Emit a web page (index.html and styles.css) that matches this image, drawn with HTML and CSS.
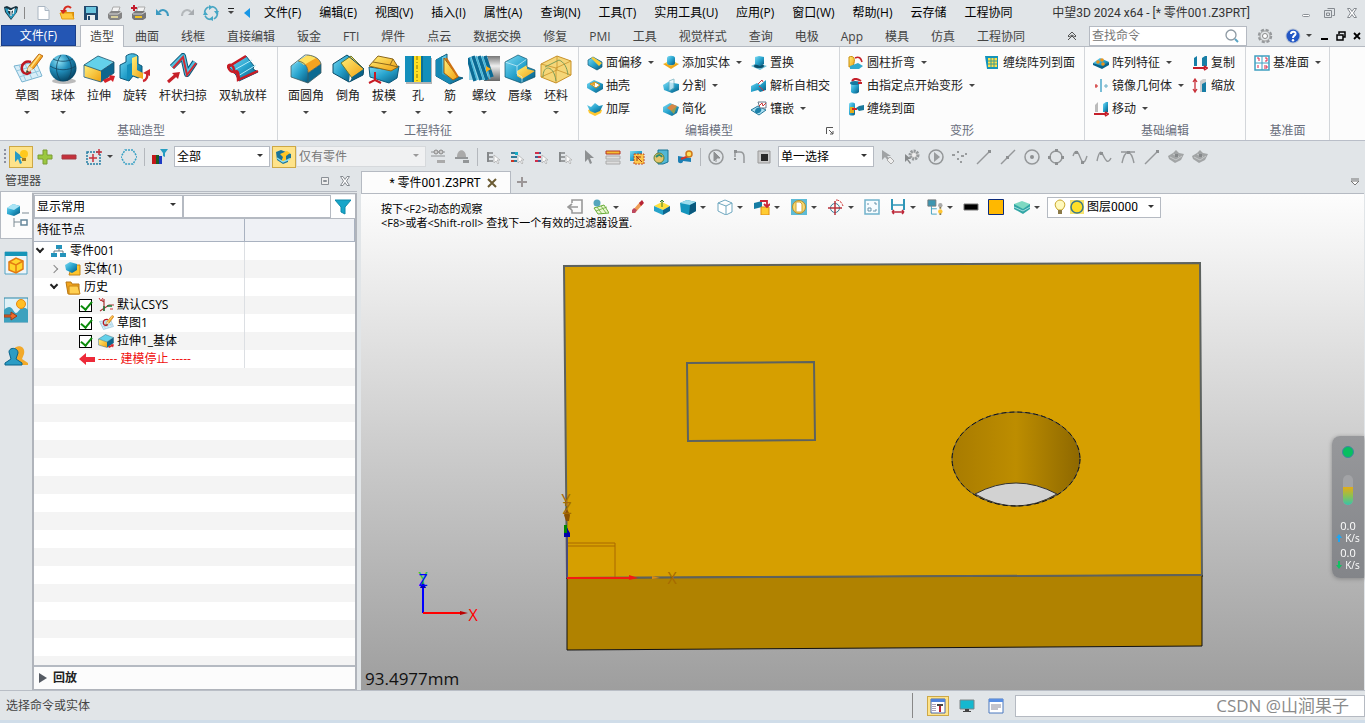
FILE: index.html
```html
<!DOCTYPE html>
<html lang="zh-CN">
  <head>
    <meta charset="utf-8">
    <title>中望3D 2024 x64 - [* 零件001.Z3PRT]</title>
    <link rel="stylesheet" href="styles.css">
  </head>
  <body>

    <!-- icon sprite -->
    <svg class="sprite" aria-hidden="true">
      <defs>
        <linearGradient id="gb" x1="0" y1="0" x2="1" y2="1"><stop offset="0" stop-color="#7fdcf4"/><stop offset=".5" stop-color="#27a3cd"/><stop offset="1" stop-color="#07597f"/></linearGradient>
        <linearGradient id="gy" x1="0" y1="0" x2="1" y2="1"><stop offset="0" stop-color="#fff07a"/><stop offset="1" stop-color="#f0a010"/></linearGradient>
        <linearGradient id="gr" x1="0" y1="0" x2="0" y2="1"><stop offset="0" stop-color="#777"/><stop offset=".4" stop-color="#eee"/><stop offset="1" stop-color="#666"/></linearGradient>
        <radialGradient id="gs" cx=".35" cy=".25" r=".8"><stop offset="0" stop-color="#8fe2f5"/><stop offset=".45" stop-color="#2390bd"/><stop offset="1" stop-color="#03405f"/></radialGradient>
        <linearGradient id="hole" x1="0" x2="1" y1="0" y2="0"><stop offset="0" stop-color="#a87b00"/><stop offset=".5" stop-color="#bd8d00"/><stop offset="1" stop-color="#8e6800"/></linearGradient>
        <linearGradient id="meter" x1="0" x2="0" y1="0" y2="1"><stop offset="0" stop-color="#e3ac17"/><stop offset=".5" stop-color="#8cc152"/><stop offset="1" stop-color="#36c3ac"/></linearGradient>
      </defs>

      <symbol id="logo" viewBox="0 0 16 16"><path d="M1 2l3-1 4 2 5-2 2 1-1 5-6 8-6-8z" fill="#16303d"/><path d="M2 3l4 1-1 3 3 4 4-7 2-1-1 5-5 6-5-7z" fill="#2b9cc0"/><path d="M5 5l3 1v5M8 6l3-2-1 5" stroke="#fff" stroke-width="1.2" fill="none"/></symbol>
      <symbol id="new" viewBox="0 0 16 16"><path d="M3 1.5h7l4 4v9H3z" fill="#fff" stroke="#aab6c2"/><path d="M10 1.5v4h4" fill="#dce6ee" stroke="#aab6c2"/></symbol>
      <symbol id="open" viewBox="0 0 16 16"><path d="M2 5h5l1 2h7v7H3z" fill="#d98c0a"/><path d="M1 8h12l2 6H3z" fill="#ffc83d" stroke="#e59d12"/><path d="M12 3c-3-3-7-1-7 3" fill="none" stroke="#d62b1f" stroke-width="2"/><path d="M1 5h7L4 9z" fill="#d62b1f"/></symbol>
      <symbol id="save" viewBox="0 0 16 16"><path d="M1 1h13l1 1v13H1z" fill="#234a6e"/><path d="M3 2h10v6H3z" fill="#6ac5df"/><path d="M4 10h8v5H4z" fill="#e9edf0"/><path d="M5 11h2v4H5z" fill="#234a6e"/></symbol>
      <symbol id="print" viewBox="0 0 16 16"><path d="M6 2h7l-2 6H4z" fill="#f4f4f4" stroke="#aaa"/><path d="M1 9l3-3h9l2 2v5l-3 2H3l-2-2z" fill="#858585"/><path d="M2 9h9l3-2" stroke="#d5d5d5" fill="none"/><path d="M4 11h7v2H4z" fill="#d8cf9c"/></symbol>
      <symbol id="printadd" viewBox="0 0 16 16"><path d="M7 2h7l-2 6H5z" fill="#f4f4f4" stroke="#aaa"/><path d="M1 9l3-3h9l2 2v5l-3 2H3l-2-2z" fill="#777"/><path d="M2 9h9l3-2" stroke="#d5d5d5" fill="none"/><path d="M4 11h7v2H4z" fill="#f0c020"/><path d="M3 0v6M0 3h6" stroke="#c3192b" stroke-width="2"/></symbol>
      <symbol id="undo" viewBox="0 0 16 16"><path d="M4 7c4-4 9-1 9 4" fill="none" stroke="#3c9ac0" stroke-width="2"/><path d="M1 4v6h6z" fill="#3c9ac0"/></symbol>
      <symbol id="redo" viewBox="0 0 16 16"><path d="M12 7C8 3 3 6 3 11" fill="none" stroke="#b4b8bb" stroke-width="2"/><path d="M15 4v6H9z" fill="#a8acb0"/></symbol>
      <symbol id="cycle" viewBox="0 0 16 16"><circle cx="8" cy="8" r="6.5" fill="none" stroke="#4aa5c2" stroke-width="1.6" stroke-dasharray="7 3.2"/><path d="M6 0l4 2-4 3zM16 6l-2 4-3-4zM10 16l-4-2 4-3zM0 10l2-4 3 4z" fill="#45a8c6"/></symbol>
      <symbol id="tri-l" viewBox="0 0 8 12"><path d="M7 1v10L1 6z" fill="#1897e6"/></symbol>
      <symbol id="min" viewBox="0 0 12 12"><rect x="2.500" y="7.500" width="7" height="2" rx="1" fill="#fff" stroke="#8b9096"/></symbol>
      <symbol id="restore" viewBox="0 0 12 12"><path d="M4.500 1.500h7v7h-2M1.500 3.500h7v7h-7zM3.500 6h3v2.500h-3z" fill="none" stroke="#858a90"/></symbol>
      <symbol id="close" viewBox="0 0 12 12"><path d="M1.500 1.500h2.500l2 3 2-3h2.500L7.500 6l3 4.500H8l-2-3-2 3H1.500l3-4.500z" fill="#fff" stroke="#858a90"/></symbol>
      <symbol id="min2" viewBox="0 0 10 10"><path d="M1 7h7v2H1z"/></symbol>
      <symbol id="restore2" viewBox="0 0 10 10"><path d="M3 3V1h6v5H7M1 4h6v5H1z" fill="none" stroke="#000" stroke-width="1.500"/></symbol>
      <symbol id="close2" viewBox="0 0 10 10"><path d="M2 2l6 6M8 2L2 8" stroke="#000" stroke-width="1.800"/></symbol>
      <symbol id="up" viewBox="0 0 10 10"><path d="M1 5l4-4 4 4-1 1-3-2-3 2zM1 9l4-4 4 4" fill="none" stroke="#555"/></symbol>
      <symbol id="lens" viewBox="0 0 16 16"><circle cx="7" cy="7" r="5" fill="none" stroke="#8e9aa3" stroke-width="1.300"/><path d="M11 11l3 3" stroke="#5aa5c5" stroke-width="2"/></symbol>
      <symbol id="gear" viewBox="0 0 16 16"><circle cx="8" cy="8" r="6" fill="#d5d8da" stroke="#96999c" stroke-width="2.5" stroke-dasharray="3 1.7"/><circle cx="8" cy="8" r="5" fill="#e3e6e8" stroke="#a5a5a5"/><circle cx="8" cy="8" r="2.5" fill="#fff" stroke="#888"/></symbol>
      <symbol id="help" viewBox="0 0 16 16"><circle cx="8" cy="8" r="7.5" fill="#b9c4d6"/><circle cx="8" cy="8" r="6.5" fill="#2357c5"/><path d="M6 6c0-3 5-3 4.500 0C10 8 8 7.500 8 10" fill="none" stroke="#fff" stroke-width="2"/><circle cx="8" cy="12.200" r="1.200" fill="#fff"/></symbol>

      <!-- large ribbon icons -->
      <symbol id="b-sketch" viewBox="0 0 32 32"><path d="M3 13l22-4 6 14-20 6z" fill="#d8edf8" stroke="#78b3d0"/><path d="M8 12l7 16M14 11l7 15M20 10l7 13M5 18l21-6M8 24l20-6" stroke="#93c8df" fill="none"/><path d="M20 9C9 6 8 21 16 21l4-2" fill="none" stroke="#bd1622" stroke-width="2.500"/><path d="M15 20l3-7L28 1l4 2-9 12z" fill="#f5a623" stroke="#bb6a12"/><path d="M20 14L29 2" stroke="#ffdf80" stroke-width="1.5"/><path d="M15 20l3-7 4 3z" fill="#f5dfb1"/><path d="M15 20l1-3 2 2z" fill="#333"/></symbol>
      <symbol id="b-sphere" viewBox="0 0 32 32"><ellipse cx="17" cy="28" rx="12" ry="3" fill="#bbb"/><circle cx="16" cy="15" r="13.500" fill="url(#gs)"/><path d="M3 13c8 5 18 5 26 0M14 2c-6 8-6 19 0 26M19 2c7 8 7 18 1 26M6 6c6 3 14 3 20 0" fill="none" stroke="#14425d" stroke-width=".8"/></symbol>
      <symbol id="b-extrude" viewBox="0 0 32 32"><path d="M1 12L15 3l15 6-12 9z" fill="#63d1ea"/><path d="M1 12l17 6v11L2 24z" fill="url(#gy)"/><path d="M18 18l13-9v11l-13 9z" fill="#0d668e"/><path d="M1 12L15 3l16 6-13 9zv12l17 5 13-9V9" fill="none" stroke="#14506a" stroke-width=".8"/><path d="M20 27l7-3-1-2 6 1-2 6-2-2-6 3z" fill="#d62229"/></symbol>
      <symbol id="b-revolve" viewBox="0 0 32 32"><path d="M1 12l6-3V3c4-3 9-3 12 0v8l4 2v10l-4 2-5-2-4 5-9-3z" fill="url(#gb)" stroke="#0a587a"/><path d="M13 5l5-2v14l6 3v6l-11-4z" fill="url(#gy)"/><path d="M13 5v18l-5 5V12l5-2" fill="#138fbc"/><path d="M24 28c4-1 5-5 4-9" fill="none" stroke="#cc2730" stroke-width="2.5"/><path d="M24 20l7-4v7z" fill="#cc2730"/></symbol>
      <symbol id="b-rod" viewBox="0 0 32 32"><path d="M5 14L16 3l4 18L28 9" fill="none" stroke="#0a587a" stroke-width="6" stroke-linejoin="round"/><path d="M5 14L16 3l4 18L28 9" fill="none" stroke="#53c0df" stroke-width="4" stroke-linejoin="round"/><path d="M6 15L16 4l4 18 9-12" fill="none" stroke="#d22931" stroke-width="2"/><path d="M1 29l8-7" stroke="#c61f28" stroke-width="3"/><path d="M5 20l8-1-2 7z" fill="#c61f28"/></symbol>
      <symbol id="b-loft" viewBox="0 0 32 32"><path d="M2 14L19 3l8 10-1 3 5 3-19 9-3-6z" fill="url(#gb)" stroke="#0a587a"/><path d="M9 16L25 7M11 23L29 12" stroke="#b4edfa"/><path d="M19 3L1 14c5 12 9-4 10 13L31 18M1 14c0-4 6-3 6 4 0 6 4-8 5 9" fill="none" stroke="#c81c25" stroke-width="2.400"/></symbol>
      <symbol id="b-fillet" viewBox="0 0 32 32"><path d="M1 13l7-5c6 1 10 5 10 12v10L1 24z" fill="url(#gb)"/><path d="M1 13L14 3l4 1L8 9z" fill="#a4e6f5"/><path d="M18 20l13-9v9l-13 10z" fill="#0c6a91"/><path d="M8 8l10-6c7 1 12 4 13 9l-13 9C18 13 14 9 8 8z" fill="#f5a320"/><path d="M8 8l10-6c3 0 6 1 8 3L14 12c-2-2-4-3-6-4z" fill="#ffe060"/><path d="M1 13L15 2h3c7 1 12 4 13 9v9L18 30 1 24zM8 8c6 1 10 5 10 12v10M18 20l13-9" fill="none" stroke="#3d5c60" stroke-width=".8"/></symbol>
      <symbol id="b-chamfer" viewBox="0 0 32 32"><path d="M1 11L15 2l4 2-5 4 4 12-1 9L1 20z" fill="url(#gb)"/><path d="M9 10l10-7 13 13-12 9z" fill="url(#gy)" stroke="#6b7a30"/><path d="M32 16l-1 6-13 7 2-5z" fill="#0a6389"/><path d="M1 11L15 2l17 14-1 6-14 7L1 20z" fill="none" stroke="#0b4c68"/></symbol>
      <symbol id="b-draft" viewBox="0 0 32 32"><path d="M1 14l22 3 8-4-2 12-8 5-19-6z" fill="url(#gb)" stroke="#0a587a"/><path d="M1 13L10 3l15 3 5 8-7 4z" fill="url(#gy)" stroke="#8c671c"/><path d="M5 9l17 3 8 2M22 12l3-6" stroke="#8c671c" fill="none"/><path d="M7 19v8l-6 3M7 27l6 3" stroke="#c71b24" stroke-width="2" fill="none"/></symbol>
      <symbol id="b-hole" viewBox="0 0 32 32"><path d="M4 5h26v26H4z" fill="#b5b5b5"/><path d="M3 3h26v26H3z" fill="#138fbc"/><path d="M12 3h7v26h-7z" fill="#ffdf21"/><path d="M11 3v26M20 3v26" stroke="#07506e" stroke-width="1"/><path d="M15 3v26" stroke="#8a7208" stroke-dasharray="4 2 1 2"/></symbol>
      <symbol id="b-rib" viewBox="0 0 32 32"><path d="M2 7L13 1v20l16 4-13 6-14-8z" fill="url(#gb)" stroke="#0a587a"/><path d="M10 5l14 19-5 3-9-7z" fill="url(#gy)" stroke="#a06010"/><path d="M2 7l6-4v18l8 4v6L2 23z" fill="#1789b4"/><path d="M12 5l12 19" stroke="#cf7110" stroke-width="2"/></symbol>
      <symbol id="b-thread" viewBox="0 0 32 32"><path d="M16 3h16v25H16z" fill="url(#gr)"/><path d="M1 4h19v23H1z" fill="#94d4e8"/><path d="M0 5l7 23M5 3l8 24M11 3l8 24M17 3l7 21" stroke="#0b6a94" stroke-width="3.500"/><path d="M2 4l7 23M8 3l8 24M14 3l8 23" stroke="#48b6d8" stroke-width="1.500"/><path d="M18 13l5 3-5 3z" fill="#f4ac1c"/></symbol>
      <symbol id="b-lip" viewBox="0 0 32 32"><path d="M1 9L14 2l9 4v8l8 3v7L17 30 1 24z" fill="url(#gb)"/><path d="M13 18l10-6v4l8 2-13 8-5-3z" fill="url(#gy)"/><path d="M1 9l12 4v8l5 3v6M13 13l10-7" fill="none" stroke="#d7f4fc" stroke-width=".7"/><path d="M1 9L14 2l9 4v8l8 3v7L17 30 1 24z" fill="none" stroke="#0b536d" stroke-width=".7"/></symbol>
      <symbol id="b-blank" viewBox="0 0 32 32"><path d="M1 11L17 3l14 5v14l-15 8L1 24z" fill="#f5d678" stroke="#c8922a"/><path d="M1 11l15 4v15M16 15l15-7M17 3v14L1 24M17 17l14 5" fill="none" stroke="#c8922a" stroke-width=".8"/><path d="M3 24c0-13 11-12 13 4M5 14l14-7c5 2 8 7 9 15" fill="none" stroke="#7b9c58"/></symbol>

      <!-- small ribbon icons -->
      <symbol id="s-offset" viewBox="0 0 16 16"><path d="M1 5l5-3 9 5v5l-5 3-9-5z" fill="url(#gb)" stroke="#0a587a" stroke-width=".7"/><path d="M4 3l2-1 9 6-3 3z" fill="#f6cb38"/></symbol>
      <symbol id="s-shell" viewBox="0 0 16 16"><path d="M0 6l7-4 9 4v5l-7 4-9-5z" fill="url(#gb)"/><path d="M3 6l5-2 5 3-4 3z" fill="#fff" stroke="#c38b19"/><path d="M3 6l5-2v4z" fill="#e3a22a"/></symbol>
      <symbol id="s-thick" viewBox="0 0 16 16"><path d="M1 9l7-3 7 3-1 3-6 3-6-3z" fill="#ffc831"/><path d="M0 4l4 2 4-4 4 3 4-1-3 6-5 2-5-2z" fill="url(#gb)"/></symbol>
      <symbol id="s-add" viewBox="0 0 16 16"><path d="M0 9l8-3 8 3-8 5z" fill="#f2a718"/><path d="M2 8l6-3 6 3-6 3z" fill="#ffdb52"/><path d="M4 3c0-3 8-3 8 0v5c0 3-8 3-8 0z" fill="url(#gb)"/></symbol>
      <symbol id="s-split" viewBox="0 0 16 16"><path d="M0 7l5-3 11 2v6l-7 3-8-3z" fill="url(#gb)"/><path d="M6 3l5-2v9l-5 3z" fill="#eaf7fd" stroke="#6ab" opacity=".7"/></symbol>
      <symbol id="s-simple" viewBox="0 0 16 16"><path d="M0 6l7-4 9 4-2 6-5 3-9-4z" fill="url(#gb)"/><path d="M4 7l5-4 5 2-4 6z" fill="#d88745"/><path d="M8 10l6-5-3 8z" fill="#8f9e55"/></symbol>
      <symbol id="s-replace" viewBox="0 0 16 16"><path d="M0 11l6-3 10 3-7 4z" fill="#6ebcd5"/><ellipse cx="8" cy="11" rx="5" ry="2" fill="#0b516e"/><path d="M4 2l4-1 5 1v7l-4 2-5-2z" fill="url(#gb)"/></symbol>
      <symbol id="s-cross" viewBox="0 0 16 16"><path d="M0 8l6-3 3 2 6-5v10l-6 2-2-2-7 2z" fill="url(#gb)"/><path d="M7 6l4-4 1 2M8 8l5 5" stroke="#c43a46" fill="none"/></symbol>
      <symbol id="s-inlay" viewBox="0 0 16 16"><path d="M0 9l7-4 8 4-7 5z" fill="#a9dff1" stroke="#25799b"/><path d="M4 10c1-5 8-4 6 0-1 3-7 3-6 0z" fill="#1d82aa"/><path d="M7 1h8v6H9z" fill="#fff" stroke="#678"/><path d="M8 5l3-3 1 3 3-3" fill="none" stroke="#c33"/></symbol>
      <symbol id="s-bend" viewBox="0 0 16 16"><path d="M1 2c5-2 7 2 4 9l-4 1z" fill="url(#gy)" stroke="#c98c0a"/><path d="M2 11l8-3 5 3-4 3H2z" fill="#31aace"/><path d="M7 3c4-2 6 0 7 4" stroke="#c72429" stroke-width="1.600" fill="none"/></symbol>
      <symbol id="s-deform" viewBox="0 0 16 16"><path d="M3 5h8v9c-2 2-6 2-8 0z" fill="url(#gb)"/><ellipse cx="7" cy="5" rx="5" ry="2" fill="#1579a0"/><path d="M4 3c2-3 6-2 9 0M10 5h4" stroke="#c5202b" stroke-width="2" fill="none"/></symbol>
      <symbol id="s-wrap" viewBox="0 0 16 16"><path d="M1 3c0-2 6-2 6 0v10c0 2-6 2-6 0z" fill="url(#gb)"/><path d="M2 6h4v6H2z" fill="#e5ac19"/><path d="M4 8h5" stroke="#d22" stroke-width="2"/><path d="M8 7l3-2 5-1v5l-5 1z" fill="#1b789b"/></symbol>
      <symbol id="s-warray" viewBox="0 0 16 16"><path d="M1 1h13v13H3z" fill="#1494bb"/><path d="M4 3h9v9H4z" fill="#ffe04a"/><path d="M7 3v9M10 3v9M4 6h9M4 9h9" stroke="#3f9a8d"/></symbol>
      <symbol id="s-array" viewBox="0 0 16 16"><path d="M0 8l7-5 9 4-7 6z" fill="url(#gb)"/><path d="M0 8l9 3v3l-9-4zM16 7v3l-7 4v-3z" fill="#0a6389"/><circle cx="5" cy="7" r="1.800" fill="#e9931c"/><circle cx="9" cy="5" r="1.800" fill="#e9931c"/><circle cx="10" cy="9" r="1.800" fill="#e9931c"/></symbol>
      <symbol id="s-mirror" viewBox="0 0 16 16"><path d="M8 1v13" stroke="#4ca8cb" stroke-width="1.500"/><path d="M3 6v4M2 8h3" stroke="#c22"/><path d="M13 6v4M11 8h4" stroke="#69aec7"/></symbol>
      <symbol id="s-move" viewBox="0 0 16 16"><path d="M2 4l3-3v10H2z" fill="#bbb"/><path d="M10 3l3-2h2v10h-5z" fill="url(#gb)"/><path d="M1 13h12M12 11l3 2-3 2" stroke="#c51f2a" stroke-width="2" fill="none"/></symbol>
      <symbol id="s-copy" viewBox="0 0 16 16"><path d="M2 3l3-2v10H2zM10 3l3-2h2v10h-5z" fill="#187ea6"/><path d="M1 13h12M12 11l3 2-3 2" stroke="#c51f2a" stroke-width="2" fill="none"/></symbol>
      <symbol id="s-scale" viewBox="0 0 16 16"><path d="M3 1v13M1 4l2-3 2 3M1 11l2 3 2-3" stroke="#c8313a" stroke-width="1.300" fill="none"/><path d="M8 3l3-2h3v13H8z" fill="#ccc"/><path d="M10 6l4-2v10h-4z" fill="#177da5"/></symbol>
      <symbol id="s-datum" viewBox="0 0 16 16"><path d="M1 1h14v14H1z" fill="#fff" stroke="#3f9fc0" stroke-width="1.500"/><path d="M8 1v7H1M8 8h7M8 8v7" stroke="#3f9fc0" fill="none"/><path d="M3 3h2v3M4 10v3M11 3h2v3h-2M10 11h3v2h-3" stroke="#d24" fill="none"/></symbol>

      <!-- selection bar icons -->
      <symbol id="t-pick" viewBox="0 0 16 16"><path d="M2 2v11l3-3 2 5 2-1-2-5h4z" fill="#289bc5"/><circle cx="11" cy="5" r="4" fill="#ffc91c"/><path d="M9 9h4v3H9z" fill="#a97b18"/></symbol>
      <symbol id="t-plus" viewBox="0 0 16 16"><path d="M6 1h4v5h5v4h-5v5H6v-5H1V6h5z" fill="#9bc840" stroke="#7a9c35"/></symbol>
      <symbol id="t-minus" viewBox="0 0 16 16"><path d="M1 6h14v4H1z" fill="#c6303b" stroke="#a23a42"/></symbol>
      <symbol id="t-box" viewBox="0 0 16 16"><path d="M1 3h13v12H1z" fill="none" stroke="#247da3" stroke-width="1.500" stroke-dasharray="2 1"/><path d="M7 5v8M3 9h8M13 0v6M10 3h6" stroke="#c8303b" stroke-width="1.500"/></symbol>
      <symbol id="t-hex" viewBox="0 0 16 16"><path d="M4 1h8l4 7-4 7H4L0 8z" fill="none" stroke="#37a0c4" stroke-width="1.500" stroke-dasharray="2 1"/></symbol>
      <symbol id="t-filter" viewBox="0 0 16 16"><path d="M0 6h4v9H0z" fill="#c41818"/><path d="M4 6h3v9H4z" fill="#185c27"/><path d="M7 7h3v8H7z" fill="#1e3bc4"/><path d="M8 0h8l-3 4v4l-2-1V4z" fill="#279ec2"/></symbol>
      <symbol id="t-part" viewBox="0 0 16 16"><path d="M0 3l5-2 10 4v4l-3 1v3l-5 2-6-4z" fill="#1a7398"/><path d="M4 5l7-3 3 2-4 3v5l-5 1 2-5z" fill="#ffc524"/><path d="M1 9l6 4 7-3" stroke="#8bdcf0" fill="none" stroke-width="1.500"/></symbol>
      <symbol id="t-chain" viewBox="0 0 16 16"><path d="M1 3h14M1 7h14M8 12h6" stroke="#8f9294"/><circle cx="6" cy="3" r="2" fill="#ccc" stroke="#888"/><circle cx="11" cy="3" r="2" fill="#ccc" stroke="#888"/><path d="M7 11h8v3H7z" fill="#aaa"/></symbol>
      <symbol id="t-hat" viewBox="0 0 16 16"><path d="M3 8c0-9 9-9 9 0z" fill="#aaa"/><path d="M1 8h13v2H1zM9 11h6v3H9z" fill="#939698"/></symbol>
      <symbol id="t-list" viewBox="0 0 16 16"><path d="M2 3h6v2H2zM2 7h6v2H2zM2 11h6v2H2z" fill="#999c9e"/><path d="M2 3h2v10H2z" fill="#85888a"/><path d="M9 6v8l2-2 2 3 1-1-2-3h3z" fill="#fafafa" stroke="#aaa" stroke-width=".7"/></symbol>
      <symbol id="t-listc" viewBox="0 0 16 16"><path d="M2 3h6v2H2zM2 7h6v2H2zM2 11h6v2H2z" fill="#327a98"/><path d="M6 3h3v3H6z" fill="#17aec7"/><path d="M2 11h3v2H2z" fill="#c32"/><path d="M9 6v8l2-2 2 3 1-1-2-3h3z" fill="#fafafa" stroke="#aaa" stroke-width=".7"/></symbol>
      <symbol id="t-listr" viewBox="0 0 16 16"><path d="M2 3h6v2H2zM2 7h6v2H2zM2 11h6v2H2z" fill="#445f91"/><path d="M2 3h4v2H2zM5 7h3v2H5zM2 11h3v2H2z" fill="#d22d4a"/><path d="M9 6v8l2-2 2 3 1-1-2-3h3z" fill="#fafafa" stroke="#aaa" stroke-width=".7"/></symbol>
      <symbol id="t-cursor" viewBox="0 0 16 16"><path d="M4 1v12l3-3 2 5 2-1-2-5h4z" fill="#8d9092"/></symbol>
      <symbol id="t-stack" viewBox="0 0 16 16"><path d="M1 2h14v3H1z" fill="#f4bd32" stroke="#b53224"/><path d="M1 7h14v3H1zM1 12h14v3H1z" fill="#ddd" stroke="#aaa"/></symbol>
      <symbol id="t-sel" viewBox="0 0 16 16"><path d="M1 2h12v10H1z" fill="url(#gb)"/><path d="M5 5h10v10H5z" fill="#fbc74c" stroke="#c74c20" stroke-dasharray="2 1"/><path d="M7 7l6 6M8 8h4M8 8v4" stroke="#9d3815"/></symbol>
      <symbol id="t-world" viewBox="0 0 16 16"><path d="M5 1h10v12l-5 2H5z" fill="#54b7d4" stroke="#167595"/><circle cx="6" cy="9" r="5" fill="#e5c46a" stroke="#62803a"/><path d="M3 8c3-3 5-2 6 0" stroke="#298c71" fill="none" stroke-width="2"/></symbol>
      <symbol id="t-bend" viewBox="0 0 16 16"><path d="M1 7v5c0 3 5 3 5 0l8 1V9L7 8z" fill="#1c7fb4"/><path d="M4 10l8-3" stroke="#d43628" stroke-width="2"/><circle cx="12" cy="5" r="3" fill="#ffdf59" stroke="#cf781b" stroke-width="1.500"/></symbol>
      <symbol id="t-ccur" viewBox="0 0 16 16"><circle cx="8" cy="8" r="7" fill="none" stroke="#96999b" stroke-width="1.500"/><path d="M6 3v9l3-3h3zM8 8v5" fill="#8d9092" stroke="#8d9092"/></symbol>
      <symbol id="t-u" viewBox="0 0 16 16"><path d="M3 8V3h5c4 0 4 3 4 5v6" fill="none" stroke="#95989a" stroke-width="1.5"/><path d="M2 1h3v3H2zM2 9h2v2H2z" fill="#8d9092"/></symbol>
      <symbol id="t-square" viewBox="0 0 16 16"><path d="M2 2h12v12H2z" fill="#ccc" stroke="#999"/><path d="M5 5h7v7H5z" fill="#292929"/></symbol>
      <symbol id="t-curx" viewBox="0 0 16 16"><path d="M2 1v10l3-3 5 6 2-2-5-5h4z" fill="#a0a3a5"/><path d="M10 8l4 4-3 3-4-4z" fill="#eee" stroke="#aaa"/></symbol>
      <symbol id="t-cgear" viewBox="0 0 16 16"><circle cx="10" cy="6" r="4" fill="#ccc" stroke="#969a9c" stroke-width="3" stroke-dasharray="2 1"/><circle cx="10" cy="6" r="2" fill="#eee"/><path d="M1 5v8l2-2 3 4 1-1-3-4h3z" fill="#86898b"/></symbol>
      <symbol id="t-play" viewBox="0 0 16 16"><circle cx="8" cy="8" r="7" fill="none" stroke="#939698" stroke-width="1.500"/><path d="M6 3l6 5-6 5z" fill="#999c9e"/></symbol>
      <symbol id="t-dots" viewBox="0 0 16 16"><path d="M0 5h3v2H0zM5 2h2v2H5zM9 6h3v2H9zM13 4h2v2h-2zM5 9h2v2H5zM8 12h2v2H8z" fill="#999c9e"/></symbol>
      <symbol id="t-line" viewBox="0 0 16 16"><path d="M1 15L14 2" stroke="#95989a" stroke-width="1.400"/><path d="M12 1h3v3h-3z" fill="#8d9092"/></symbol>
      <symbol id="t-mid" viewBox="0 0 16 16"><path d="M1 15L15 1" stroke="#95989a" stroke-width="1.400"/><path d="M6 7h3v3H6z" fill="#8d9092"/></symbol>
      <symbol id="t-center" viewBox="0 0 16 16"><circle cx="8" cy="8" r="7" fill="none" stroke="#95989a" stroke-width="1.500"/><circle cx="8" cy="8" r="2" fill="#8d9092"/></symbol>
      <symbol id="t-quad" viewBox="0 0 16 16"><circle cx="8" cy="8" r="6" fill="none" stroke="#95989a" stroke-width="1.500"/><path d="M7 0h3v3H7zM7 13h3v3H7zM0 7h3v3H0zM13 7h3v3h-3z" fill="#8d9092"/></symbol>
      <symbol id="t-wave" viewBox="0 0 16 16"><path d="M1 7c3-8 5-4 7 1s4 9 7-1" fill="none" stroke="#95989a" stroke-width="1.400"/><path d="M3 2h3v3H3zM9 12h3v3H9z" fill="#8d9092"/></symbol>
      <symbol id="t-wave2" viewBox="0 0 16 16"><path d="M1 12C4-2 6 4 8 8s4 7 7 1" fill="none" stroke="#95989a" stroke-width="1.400"/><path d="M4 3h3v3H4z" fill="#8d9092"/></symbol>
      <symbol id="t-tan" viewBox="0 0 16 16"><path d="M1 3h14M2 14c3-14 9-14 12 0" fill="none" stroke="#95989a" stroke-width="1.400"/><path d="M7 2h3v3H7z" fill="#8d9092"/></symbol>
      <symbol id="t-face" viewBox="0 0 16 16"><path d="M0 7l5-3 3-3 3 3 5 1-3 6-6 3-6-4z" fill="#a2a5a6"/><path d="M2 8l6 3 6-4M5 5l6 3" stroke="#c7c9ca" fill="none"/><path d="M7 5h3v3H7z" fill="#85888a"/></symbol>

      <!-- manager icons -->
      <symbol id="m-tree" viewBox="0 0 24 26"><path d="M2 6l6-4 7 2v7l-6 3-7-2z" fill="url(#gb)"/><path d="M2 6l6-4 7 2-6 4z" fill="#a9e4f5"/><path d="M9 16v9M9 20h6M17 11h7" stroke="#7d8b94" fill="none"/><path d="M16 18h6v5h-6z" fill="#fff" stroke="#65869a" stroke-width="1.500"/></symbol>
      <symbol id="m-cube" viewBox="0 0 24 24"><path d="M1 1h22v22H1z" fill="#eef5f9" stroke="#55a4c4"/><path d="M1 1h22v4H1z" fill="#1595b8"/><path d="M5 11l7-4 7 3v8l-7 4-7-3z" fill="#ffd52c" stroke="#e37b12" stroke-width="1.500"/><path d="M5 11l7 3 7-4M12 14v8" fill="none" stroke="#e37b12" stroke-width="1.500"/></symbol>
      <symbol id="m-view" viewBox="0 0 24 24"><path d="M0 0h24v24H0z" fill="#dff1f7" stroke="#2b87a9"/><path d="M0 12c8-8 9 3 12 3s5-10 12-3v12H0z" fill="#3ca1be"/><circle cx="17" cy="6" r="4.500" fill="#ffbf24" stroke="#ea8711"/><path d="M0 17h7v-3l6 4-6 4v-3H0z" fill="#ed6a27" stroke="#993a18"/></symbol>
      <symbol id="m-user" viewBox="0 0 24 24"><path d="M10 4c3-5 12-3 10 5l-2 5 6 4v2H9z" fill="#f2a92a"/><path d="M5 7c0-5 9-5 9 1l-2 6 6 4v2H1v-2l6-4z" fill="#2b9cc4" stroke="#0a648b"/></symbol>
      <symbol id="m-dock" viewBox="0 0 10 10"><path d="M1.500 1.500h7v7h-7zM3.500 4.500h3v1h-3z" fill="#eee" stroke="#8b9096"/></symbol>
      <symbol id="funnel" viewBox="0 0 16 16"><path d="M0 1h16L10 8v7l-4-2V8z" fill="#16a5c9" stroke="#0d89aa"/></symbol>
      <symbol id="n-part" viewBox="0 0 16 16"><path d="M5 2h6v4H5zM0 10h6v4H0zM9 10h6v4H9z" fill="#2493bb"/><path d="M8 5v3M3 10V8h9v2" fill="none" stroke="#6b7a83"/></symbol>
      <symbol id="n-body" viewBox="0 0 16 16"><path d="M7 4h8v10H4z" fill="#ffc52d" stroke="#c6871a"/><path d="M0 4l5-3 7 2v6l-5 3-6-3z" fill="url(#gb)"/></symbol>
      <symbol id="n-folder" viewBox="0 0 16 16"><path d="M1 3h5l1 2h7v10H3z" fill="#f1a51d" stroke="#b97712"/><path d="M4 7h9l2 8H4z" fill="#ffd052" stroke="#c88315"/></symbol>
      <symbol id="n-csys" viewBox="0 0 16 16"><path d="M6 14V2M3 3l3 2M2 14l9-6h5" fill="none" stroke="#a33" stroke-width="1.200"/><path d="M6 9v5M9 9h5" stroke="#15803a" stroke-width="1.500"/><path d="M1 1l2 3 2-3M12 12h3" stroke="#c33" fill="none"/></symbol>
      <symbol id="n-stop" viewBox="0 0 16 12"><path d="M0 6l7-6v4h9v5H7v3z" fill="#ed2a39"/></symbol>

      <!-- view toolbar icons -->
      <symbol id="v-exit" viewBox="0 0 16 16"><path d="M5 4V1h10v13H5v-3" fill="none" stroke="#999" stroke-width="1.600"/><path d="M1 8h10M5 5L1 8l4 3" fill="none" stroke="#999" stroke-width="1.600"/></symbol>
      <symbol id="v-grid" viewBox="0 0 16 16"><path d="M1 9l10-3 5 8-11 1z" fill="#eaf6d1" stroke="#69ad38"/><path d="M4 8l5 7M8 7l5 7M3 12l11-4" stroke="#69ad38" stroke-width=".8"/><circle cx="4" cy="4" r="3.500" fill="#54a6bd"/></symbol>
      <symbol id="v-pen" viewBox="0 0 16 16"><path d="M3 12l8-9 3 2-8 9z" fill="#ef9c55"/><path d="M10 4l3-3 2 3-3 3z" fill="#b72436"/><path d="M3 11l2-2 3 2-2 3H3z" fill="#bd4960"/></symbol>
      <symbol id="v-plane" viewBox="0 0 16 16"><path d="M0 7l8-4 8 4-7 4z" fill="#ffe13c"/><path d="M0 7l9 4v5l-9-4z" fill="#26a3ca"/><path d="M16 7l-7 4v5l7-4z" fill="#0c6890"/><path d="M8 1v7M6 3l2-2 2 2" stroke="#367d29" fill="none"/></symbol>
      <symbol id="v-shade" viewBox="0 0 16 16"><path d="M0 4l7-3 9 2v9l-7 4-8-3z" fill="#1595bd"/><path d="M0 4l7-3 9 2-6 3z" fill="#9edded"/><path d="M10 6l6-3v9l-7 4z" fill="#0a587c"/></symbol>
      <symbol id="v-wire" viewBox="0 0 16 16"><path d="M1 4l7-3 7 3v9l-6 3-8-4zM1 4l8 3 6-3M9 7v9" fill="#fff" stroke="#6fa7bf"/></symbol>
      <symbol id="v-swap" viewBox="0 0 16 16"><path d="M0 4l8-2v6l-8 2z" fill="#167da4"/><path d="M7 8h8v8H7z" fill="#ffcc32" stroke="#df8b15"/><path d="M6 2h7v5M10 5l3 3 3-3" fill="none" stroke="#cb2537" stroke-width="1.800"/></symbol>
      <symbol id="v-zoom" viewBox="0 0 16 16"><path d="M0 0h16v16H0z" fill="#5dbbd6"/><circle cx="8" cy="8" r="6.500" fill="#f6da74" stroke="#b88b28"/><path d="M5 3h4l2 2v8H5z" fill="#fff" stroke="#d4a532"/></symbol>
      <symbol id="v-target" viewBox="0 0 16 16"><circle cx="7" cy="9" r="4.500" fill="none" stroke="#327b98"/><path d="M7 2v14M0 9h14" stroke="#b9333d" stroke-width="1.500"/><path d="M8 1c4 0 6 3 7 6" fill="none" stroke="#c33" stroke-dasharray="3 1"/></symbol>
      <symbol id="v-win" viewBox="0 0 16 16"><path d="M1 1h14v14H1z" fill="#f6fcff" stroke="#72b2cc" stroke-width="1.500"/><path d="M4 9h3v3H4zM10 4h2v2M4 6V4M12 10v2h-3" fill="none" stroke="#6a94aa"/></symbol>
      <symbol id="v-dim" viewBox="0 0 16 16"><path d="M2 0v11M14 0v11" stroke="#2e96b7" stroke-width="2"/><path d="M3 6h10" stroke="#2e96b7" stroke-width="1.500"/><path d="M2 13h12M2 13l2-2M2 13l2 2M14 13l-2-2M14 13l-2 2" stroke="#bd2739" stroke-width="1.500"/></symbol>
      <symbol id="v-disp" viewBox="0 0 18 18"><path d="M1 1h9v7H1z" fill="#3d96b1" stroke="#777"/><path d="M5 8v9h6M5 11h6" stroke="#389dbd" fill="none"/><circle cx="15" cy="7" r="2.500" fill="#aaa"/><circle cx="15" cy="14" r="2.500" fill="#ffc533"/><path d="M14 9h2v2h-2zM14 16h2v2h-2z" fill="#8b7b46"/></symbol>
      <symbol id="v-black" viewBox="0 0 16 16"><path d="M1 5h14v6H1z" fill="#000" stroke="#777"/></symbol>
      <symbol id="v-color" viewBox="0 0 16 16"><path d="M.5.5h15v15H.5z" fill="#ffb800" stroke="#0b2a7b"/></symbol>
      <symbol id="v-layer" viewBox="0 0 16 16"><path d="M0 5v5l9 5 7-5V5z" fill="#31a6a5"/><path d="M0 8l9 4 7-4" fill="none" stroke="#a7dfdf"/><path d="M0 5l8-3 8 3-7 5z" fill="#7ed9c2"/></symbol>
      <symbol id="bulb" viewBox="0 0 12 16"><path d="M4 11C-2 5 3 1 6 1s8 4 2 10z" fill="#fff9bd" stroke="#c8a527"/><path d="M4 11h4v4H4z" fill="#8b7a48"/></symbol>
      <symbol id="dot" viewBox="0 0 16 16"><path d="M1 1h14v14H1z" fill="#f8e46b"/><circle cx="8" cy="8" r="6" fill="#ffdf27" stroke="#3c7888" stroke-width="1.500"/></symbol>
      <symbol id="st-tool" viewBox="0 0 16 16"><path d="M1 1h14v14H1z" fill="#fff" stroke="#4b69ab"/><path d="M1 1h14v3H1z" fill="#4f83dd"/><path d="M3 6v8M5 6v8" stroke="#547" stroke-dasharray="1 1"/><path d="M7 6h6v2H7z" fill="#444"/><path d="M9 8h2v6H9z" fill="#b23"/></symbol>
      <symbol id="st-screen" viewBox="0 0 16 14"><path d="M1 1h14v9H1z" fill="#15b8cf" stroke="#7d8587"/><path d="M6 10h4v2H6zM4 12h8v1H4z" fill="#444"/></symbol>
      <symbol id="st-doc" viewBox="0 0 16 16"><path d="M1 1h14v14H1z" fill="#fff" stroke="#4b79bf"/><path d="M1 1h14v3H1z" fill="#5a8fe3"/><path d="M3 7h10M3 9h10M3 11h7" stroke="#889"/></symbol>
    </svg>

    <header class="titlebar">
      <div class="quick">
        <svg class="i16 logo"><use href="#logo"/></svg>
        <span class="sep"></span>
        <button aria-label="新建"><svg class="i16"><use href="#new"/></svg></button>
        <button aria-label="打开"><svg class="i16"><use href="#open"/></svg></button>
        <button aria-label="保存"><svg class="i16"><use href="#save"/></svg></button>
        <button aria-label="打印"><svg class="i16"><use href="#print"/></svg></button>
        <button aria-label="打印设置"><svg class="i16"><use href="#printadd"/></svg></button>
        <button aria-label="撤销"><svg class="i16"><use href="#undo"/></svg></button>
        <button aria-label="重做"><svg class="i16"><use href="#redo"/></svg></button>
        <button aria-label="刷新"><svg class="i16"><use href="#cycle"/></svg></button>
        <button class="narrow" aria-label="更多"><span class="caret bar"></span></button>
        <button class="narrow" aria-label="收起"><svg class="tri"><use href="#tri-l"/></svg></button>
      </div>
      <nav class="menu">
        <a href="#">文件(F)</a><a href="#">编辑(E)</a><a href="#">视图(V)</a><a href="#">插入(I)</a><a href="#">属性(A)</a><a href="#">查询(N)</a><a href="#">工具(T)</a><a href="#">实用工具(U)</a><a href="#">应用(P)</a><a href="#">窗口(W)</a><a href="#">帮助(H)</a><a href="#">云存储</a><a href="#">工程协同</a>
      </nav>
      <div class="title">中望3D 2024 x64 - [* 零件001.Z3PRT]</div>
      <div class="winbtns">
        <button aria-label="最小化"><svg class="i12"><use href="#min"/></svg></button>
        <button aria-label="还原"><svg class="i12"><use href="#restore"/></svg></button>
        <button aria-label="关闭"><svg class="i12"><use href="#close"/></svg></button>
      </div>
    </header>

    <div class="tabs">
      <button class="file">文件(F)</button>
      <nav class="tablist">
        <a class="active" href="#">造型</a><a href="#">曲面</a><a href="#">线框</a><a href="#">直接编辑</a><a href="#">钣金</a><a href="#">FTI</a><a href="#">焊件</a><a href="#">点云</a><a href="#">数据交换</a><a href="#">修复</a><a href="#">PMI</a><a href="#">工具</a><a href="#">视觉样式</a><a href="#">查询</a><a href="#">电极</a><a href="#">App</a><a href="#">模具</a><a href="#">仿真</a><a href="#">工程协同</a>
      </nav>
      <div class="tabtools">
        <button aria-label="折叠"><svg class="i10"><use href="#up"/></svg></button>
        <div class="search">
          <input type="text" aria-label="查找命令" placeholder="查找命令">
          <svg class="i16"><use href="#lens"/></svg>
        </div>
        <button class="wide" aria-label="设置"><svg class="i16"><use href="#gear"/></svg></button>
        <button class="helpbtn" aria-label="帮助"><svg class="i16"><use href="#help"/></svg><span class="caret"></span></button>
        <button aria-label="最小化文档"><svg class="i10"><use href="#min2"/></svg></button>
        <button aria-label="还原文档"><svg class="i10"><use href="#restore2"/></svg></button>
        <button aria-label="关闭文档"><svg class="i10"><use href="#close2"/></svg></button>
      </div>
    </div>

    <div class="ribbon">
      <section class="group first">
        <div class="bigs">
          <button><svg><use href="#b-sketch"/></svg>草图<span class="caret"></span></button>
          <button><svg><use href="#b-sphere"/></svg>球体<span class="caret"></span></button>
          <button><svg><use href="#b-extrude"/></svg>拉伸</button>
          <button><svg><use href="#b-revolve"/></svg>旋转</button>
          <button class="w4"><svg><use href="#b-rod"/></svg>杆状扫掠<span class="caret"></span></button>
          <button class="w4"><svg><use href="#b-loft"/></svg>双轨放样<span class="caret"></span></button>
        </div>
        <h2>基础造型</h2>
      </section>
      <section class="group">
        <div class="bigs">
          <button class="w3"><svg><use href="#b-fillet"/></svg>面圆角<span class="caret"></span></button>
          <button><svg><use href="#b-chamfer"/></svg>倒角</button>
          <button><svg><use href="#b-draft"/></svg>拔模<span class="caret"></span></button>
          <button class="w1"><svg><use href="#b-hole"/></svg>孔<span class="caret"></span></button>
          <button class="w1"><svg><use href="#b-rib"/></svg>筋<span class="caret"></span></button>
          <button><svg><use href="#b-thread"/></svg>螺纹<span class="caret"></span></button>
          <button><svg><use href="#b-lip"/></svg>唇缘</button>
          <button><svg><use href="#b-blank"/></svg>坯料<span class="caret"></span></button>
        </div>
        <h2>工程特征</h2>
      </section>
      <section class="group small">
        <div class="smalls edit">
          <button><svg class="i16"><use href="#s-offset"/></svg>面偏移<span class="caret"></span></button>
          <button><svg class="i16"><use href="#s-add"/></svg>添加实体<span class="caret"></span></button>
          <button><svg class="i16"><use href="#s-replace"/></svg>置换</button>
          <button><svg class="i16"><use href="#s-shell"/></svg>抽壳</button>
          <button><svg class="i16"><use href="#s-split"/></svg>分割<span class="caret"></span></button>
          <button><svg class="i16"><use href="#s-cross"/></svg>解析自相交</button>
          <button><svg class="i16"><use href="#s-thick"/></svg>加厚</button>
          <button><svg class="i16"><use href="#s-simple"/></svg>简化</button>
          <button><svg class="i16"><use href="#s-inlay"/></svg>镶嵌<span class="caret"></span></button>
        </div>
        <h2>编辑模型</h2>
        <button class="launch" aria-label="更多选项"><svg viewBox="0 0 8 8"><path d="M.5 7V.5H7M3 3l4 4M7 4v3H4" fill="none" stroke="#555"/></svg></button>
      </section>
      <section class="group small">
        <div class="smalls morph">
          <button><svg class="i16"><use href="#s-bend"/></svg>圆柱折弯<span class="caret"></span></button>
          <button><svg class="i16"><use href="#s-warray"/></svg>缠绕阵列到面</button>
          <button><svg class="i16"><use href="#s-deform"/></svg>由指定点开始变形<span class="caret"></span></button>
          <span></span>
          <button><svg class="i16"><use href="#s-wrap"/></svg>缠绕到面</button>
        </div>
        <h2>变形</h2>
      </section>
      <section class="group small">
        <div class="smalls basic">
          <button><svg class="i16"><use href="#s-array"/></svg>阵列特征<span class="caret"></span></button>
          <button><svg class="i16"><use href="#s-copy"/></svg>复制</button>
          <button><svg class="i16"><use href="#s-mirror"/></svg>镜像几何体<span class="caret"></span></button>
          <button><svg class="i16"><use href="#s-scale"/></svg>缩放</button>
          <button><svg class="i16"><use href="#s-move"/></svg>移动<span class="caret"></span></button>
        </div>
        <h2>基础编辑</h2>
      </section>
      <section class="group small">
        <div class="smalls">
          <button><svg class="i16"><use href="#s-datum"/></svg>基准面<span class="caret"></span></button>
        </div>
        <h2>基准面</h2>
      </section>
    </div>

    <div class="selbar">
      <span class="grip"></span>
      <button class="on" aria-label="拾取"><svg class="i16"><use href="#t-pick"/></svg></button>
      <button aria-label="添加"><svg class="i16"><use href="#t-plus"/></svg></button>
      <button aria-label="移除"><svg class="i16"><use href="#t-minus"/></svg></button>
      <button class="drop" aria-label="框选"><svg class="i16"><use href="#t-box"/></svg><span class="caret"></span></button>
      <button aria-label="多边形"><svg class="i16"><use href="#t-hex"/></svg></button>
      <span class="sep"></span>
      <button aria-label="过滤器"><svg class="i16"><use href="#t-filter"/></svg></button>
      <span class="combo"><select aria-label="过滤器列表"><option>全部</option></select></span>
      <button class="on" aria-label="零件"><svg class="i16"><use href="#t-part"/></svg></button>
      <span class="combo part"><select aria-label="范围" disabled><option>仅有零件</option></select></span>
      <button aria-label="链"><svg class="i16"><use href="#t-chain"/></svg></button>
      <button aria-label="面链"><svg class="i16"><use href="#t-hat"/></svg></button>
      <span class="sep"></span>
      <button aria-label="列表"><svg class="i16"><use href="#t-list"/></svg></button>
      <button aria-label="列表二"><svg class="i16"><use href="#t-listc"/></svg></button>
      <button aria-label="列表三"><svg class="i16"><use href="#t-listr"/></svg></button>
      <button aria-label="列表四"><svg class="i16"><use href="#t-list"/></svg></button>
      <button aria-label="选择"><svg class="i16"><use href="#t-cursor"/></svg></button>
      <button aria-label="堆叠"><svg class="i16"><use href="#t-stack"/></svg></button>
      <button aria-label="区域"><svg class="i16"><use href="#t-sel"/></svg></button>
      <button aria-label="外观"><svg class="i16"><use href="#t-world"/></svg></button>
      <button aria-label="折弯"><svg class="i16"><use href="#t-bend"/></svg></button>
      <span class="sep"></span>
      <button aria-label="光标"><svg class="i16"><use href="#t-ccur"/></svg></button>
      <button aria-label="曲线"><svg class="i16"><use href="#t-u"/></svg></button>
      <button aria-label="方块"><svg class="i16"><use href="#t-square"/></svg></button>
      <span class="combo"><select aria-label="选择方式"><option>单一选择</option></select></span>
      <button aria-label="清除"><svg class="i16"><use href="#t-curx"/></svg></button>
      <button aria-label="选项"><svg class="i16"><use href="#t-cgear"/></svg></button>
      <button aria-label="播放"><svg class="i16"><use href="#t-play"/></svg></button>
      <button aria-label="点"><svg class="i16"><use href="#t-dots"/></svg></button>
      <button aria-label="端点"><svg class="i16"><use href="#t-line"/></svg></button>
      <button aria-label="中点"><svg class="i16"><use href="#t-mid"/></svg></button>
      <button aria-label="圆心"><svg class="i16"><use href="#t-center"/></svg></button>
      <button aria-label="象限点"><svg class="i16"><use href="#t-quad"/></svg></button>
      <button aria-label="样条点"><svg class="i16"><use href="#t-wave"/></svg></button>
      <button aria-label="曲线点"><svg class="i16"><use href="#t-wave2"/></svg></button>
      <button aria-label="切点"><svg class="i16"><use href="#t-tan"/></svg></button>
      <button aria-label="线上点"><svg class="i16"><use href="#t-line"/></svg></button>
      <button aria-label="面上点"><svg class="i16"><use href="#t-face"/></svg></button>
      <button aria-label="面中心"><svg class="i16"><use href="#t-face"/></svg></button>
    </div>

    <main>
      <aside class="manager">
        <div class="mhead">
          <span>管理器</span>
          <button aria-label="浮动"><svg class="i10"><use href="#m-dock"/></svg></button>
          <button aria-label="关闭"><svg class="i12"><use href="#close"/></svg></button>
        </div>
        <div class="mbody">
          <div class="side">
            <button class="active" aria-label="历史管理"><svg><use href="#m-tree"/></svg></button>
            <button aria-label="装配管理"><svg><use href="#m-cube"/></svg></button>
            <button aria-label="视图管理"><svg><use href="#m-view"/></svg></button>
            <button aria-label="角色管理"><svg><use href="#m-user"/></svg></button>
          </div>
          <div class="panel">
            <div class="filters">
              <span class="combo"><select aria-label="显示"><option>显示常用</option></select></span>
              <input type="text" aria-label="搜索特征">
              <button aria-label="筛选"><svg class="i16"><use href="#funnel"/></svg></button>
            </div>
            <div class="treewrap">
              <table class="tree">
                <thead>
                  <tr><th>特征节点</th><th></th></tr>
                </thead>
                <tbody>
                  <tr><td><div class="node"><i class="chev open"></i><svg class="i16"><use href="#n-part"/></svg>零件001</div></td><td></td></tr>
                  <tr><td><div class="node l1"><i class="chev"></i><svg class="i16"><use href="#n-body"/></svg>实体(1)</div></td><td></td></tr>
                  <tr><td><div class="node l1"><i class="chev open"></i><svg class="i16"><use href="#n-folder"/></svg>历史</div></td><td></td></tr>
                  <tr><td><label class="node l2"><input type="checkbox" checked><svg class="i16"><use href="#n-csys"/></svg>默认CSYS</label></td><td></td></tr>
                  <tr><td><label class="node l2"><input type="checkbox" checked><svg class="i16"><use href="#b-sketch"/></svg>草图1</label></td><td></td></tr>
                  <tr><td><label class="node l2"><input type="checkbox" checked><svg class="i16"><use href="#b-extrude"/></svg>拉伸1_基体</label></td><td></td></tr>
                  <tr><td><div class="node l2 stop"><svg class="i16"><use href="#n-stop"/></svg>----- 建模停止 -----</div></td><td></td></tr>
                </tbody>
              </table>
            </div>
            <button class="replay"><i></i>回放</button>
          </div>
        </div>
      </aside>

      <section class="doc">
        <div class="doctabs">
          <div class="doctab">* 零件001.Z3PRT <button aria-label="关闭标签"><svg viewBox="0 0 10 10"><path d="M1 1l8 8M9 1L1 9" stroke="#6b5b33" stroke-width="2"/></svg></button></div>
          <button class="add" aria-label="新建标签"><svg viewBox="0 0 10 10"><path d="M5 0v10M0 5h10" stroke="#9b9697" stroke-width="2"/></svg></button>
          <button class="more" aria-label="标签列表"><svg viewBox="0 0 10 8"><path d="M1 1h8M1 3h8L5 7z" fill="#fff" stroke="#777"/></svg></button>
        </div>

        <div class="canvas">
          <svg class="model" viewBox="0 1 1003 496">
            <path d="M203 73l636-3 2 313-635 2z" fill="#d69f00" stroke="#5d625f" stroke-width="2"/>
            <path d="M206 385l635-3v71l-635 4z" fill="#b08200" stroke="#111"/>
            <path d="M206 385l635-3" stroke="#5d625f" stroke-width="2"/>
            <path d="M326 170l127-1 1 78-127 1z" fill="none" stroke="#5d625f" stroke-width="2"/>
            <ellipse cx="655" cy="266" rx="64" ry="47" fill="url(#hole)"/>
            <path d="M614 301q41-22 82 0-41 24-82 0z" fill="#d2d2d2" stroke="#333"/>
            <ellipse cx="655" cy="266" rx="64" ry="47" fill="none" stroke="#5b584c"/>
            <ellipse cx="655" cy="266" rx="64" ry="47" fill="none" stroke="#111" stroke-dasharray="5 3"/>
            <path d="M207 350h47v35M207 353h47" fill="none" stroke="#a96900"/>
            <path d="M206 385V335" stroke="#4c4c78" stroke-width="2"/>
            <path d="M206 385h64" stroke="#f31b12" stroke-width="2"/>
            <path d="M268 382l9 3-9 2z" fill="#f31b12"/>
            <path d="M291 383l8 2-8 1z" fill="#d98b16"/>
            <path d="M203 340l3-5 3 5v4h-6z" fill="#00a"/>
            <path d="M203 332h3v8h-3z" fill="#080"/>
            <path d="M203 322l3-6 3 6-1 6h-3z" fill="#8b5200"/>
            <g class="axis tan"><text x="205" y="313">Y</text><text x="206" y="321">Z</text><text x="311" y="391">X</text></g>
            <path d="M62 420V392" stroke="#00f" stroke-width="2"/><path d="M59 395l3-7 3 7z" fill="#00b"/>
            <path d="M62 420h40" stroke="#f00" stroke-width="2"/><path d="M99 418l8 2-8 2z" fill="#b00"/>
            <g class="axis"><text class="y" x="62" y="391">Y</text><text class="z" x="62" y="393">Z</text><text class="x" x="112" y="428">X</text></g>
          </svg>
          <p class="hint">按下&lt;F2&gt;动态的观察<br>&lt;F8&gt;或者&lt;Shift-roll&gt; 查找下一个有效的过滤器设置.</p>
          <div class="viewbar">
            <button aria-label="退出"><svg class="i16"><use href="#v-exit"/></svg></button>
            <button class="drop" aria-label="栅格"><svg class="i16"><use href="#v-grid"/></svg><span class="caret"></span></button>
            <button aria-label="擦除"><svg class="i16"><use href="#v-pen"/></svg></button>
            <button aria-label="平面"><svg class="i16"><use href="#v-plane"/></svg></button>
            <button class="drop" aria-label="着色"><svg class="i16"><use href="#v-shade"/></svg><span class="caret"></span></button>
            <button class="drop" aria-label="线框"><svg class="i16"><use href="#v-wire"/></svg><span class="caret"></span></button>
            <button class="drop" aria-label="切换"><svg class="i16"><use href="#v-swap"/></svg><span class="caret"></span></button>
            <button class="drop" aria-label="缩放"><svg class="i16"><use href="#v-zoom"/></svg><span class="caret"></span></button>
            <button class="drop" aria-label="旋转中心"><svg class="i16"><use href="#v-target"/></svg><span class="caret"></span></button>
            <button aria-label="窗口"><svg class="i16"><use href="#v-win"/></svg></button>
            <button class="drop" aria-label="标注"><svg class="i16"><use href="#v-dim"/></svg><span class="caret"></span></button>
            <button class="drop" aria-label="显示"><svg class="i16"><use href="#v-disp"/></svg><span class="caret"></span></button>
            <button aria-label="线型"><svg class="i16"><use href="#v-black"/></svg></button>
            <button aria-label="颜色"><svg class="i16"><use href="#v-color"/></svg></button>
            <button class="drop" aria-label="图层管理"><svg class="i16"><use href="#v-layer"/></svg><span class="caret"></span></button>
            <span class="combo layer"><svg class="bulb"><use href="#bulb"/></svg><svg class="i16"><use href="#dot"/></svg><select aria-label="图层"><option>图层0000</option></select></span>
          </div>
          <div class="scale">93.4977mm</div>
        </div>
      </section>
    </main>

    <footer class="status">
      <span class="msg">选择命令或实体</span>
      <span class="sep"></span>
      <button class="on" aria-label="工具栏"><svg class="i16"><use href="#st-tool"/></svg></button>
      <button aria-label="显示器"><svg class="i16"><use href="#st-screen"/></svg></button>
      <button aria-label="输出"><svg class="i16"><use href="#st-doc"/></svg></button>
      <div class="cmd"><input type="text" aria-label="命令"><span>CSDN @山涧果子</span></div>
    </footer>

    <div class="netmon">
      <svg viewBox="0 0 12 12"><circle cx="6" cy="6" r="5.500" fill="#07bf60" stroke="#4285a0"/></svg>
      <svg class="meter" viewBox="0 0 10 30"><rect width="10" height="30" rx="5" fill="#a2a3a6"/><path d="M0 12h10v13a5 5 0 0 1-10 0z" fill="url(#meter)"/></svg>
      <b>0.0</b>
      <small><svg viewBox="0 0 6 8"><path d="M3 0l3 4H4v4H2V4H0z" fill="#1da6f4"/></svg>K/s</small>
      <b>0.0</b>
      <small><svg viewBox="0 0 6 8"><path d="M3 8l3-4H4V0H2v4H0z" fill="#12c062"/></svg>K/s</small>
    </div>

  </body>
</html>
```
FILE: styles.css
```css
* {
  box-sizing: border-box;
}
body {
  margin: 0;
  height: 100vh;
  display: flex;
  flex-direction: column;
  overflow: hidden;
  background: #e1e5e8;
  color: #222;
  font: 12px/16px "Open Sans", "Noto Sans CJK SC", sans-serif;
  white-space: nowrap;
}
button, input, select {
  font: inherit;
  color: inherit;
  margin: 0;
  padding: 0;
  border: 0;
  background: none;
}
button {
  display: flex;
  align-items: center;
  justify-content: center;
}
a {
  color: inherit;
  text-decoration: none;
}
svg {
  display: block;
  flex: none;
}
.sprite {
  position: absolute;
  width: 0;
  height: 0;
}
.i16 { width: 16px; height: 16px; }
.i12 { width: 12px; height: 12px; }
.i10 { width: 10px; height: 10px; }
.caret {
  width: 0;
  height: 0;
  box-sizing: content-box;
  border: solid transparent;
  border-width: 3px 3px 0;
  border-top-color: #444;
}
.caret.bar {
  position: relative;
}
.caret.bar::before {
  content: "";
  position: absolute;
  left: -3px;
  top: -6px;
  width: 6px;
  height: 1px;
  background: #222;
}
.sep {
  width: 1px;
  height: 16px;
  background: #b4b8bd;
}

/* title bar */
.titlebar {
  display: flex;
  align-items: center;
  height: 25px;
  color: #000;
}
.quick {
  display: flex;
  align-items: center;
  width: 257px;
}
.logo {
  margin: 0 5px 0 3px;
}
.quick .sep {
  height: 12px;
  background: #888;
  margin-right: 6px;
}
.quick button {
  width: 24px;
  height: 24px;
}
.quick .narrow {
  width: 16px;
}
.tri {
  width: 8px;
  height: 12px;
}
.menu {
  display: flex;
  gap: 18px;
  padding-left: 7px;
}
.title {
  margin-left: auto;
  font-family: Roboto, "Noto Sans CJK SC", sans-serif;
  color: #333;
}
.winbtns {
  display: flex;
  margin: 0 2px 0 44px;
}
.winbtns button {
  width: 23px;
  height: 22px;
}

/* ribbon tabs */
.tabs {
  display: flex;
  height: 22px;
  padding-left: 1px;
  border-bottom: 1px solid #b5bac2;
}
.file {
  width: 75px;
  height: 21px;
  margin-right: 4px;
  background: #2456b4;
  border: 1px solid #1a3f8a;
  color: #fff;
}
.tablist {
  display: flex;
  color: #444;
}
.tablist a {
  padding: 4px 11px 0;
  height: 22px;
}
.tablist .active {
  padding: 3px 9px 0;
  background: #fcfcfc;
  border: 1px solid #b5bac2;
  border-bottom: 0;
}
.tabtools {
  display: flex;
  align-items: center;
  margin-left: auto;
}
.tabtools button {
  width: 16px;
}
.tabtools .wide {
  width: 28px;
}
.tabtools .helpbtn {
  justify-content: flex-start;
  width: 38px;
  padding-left: 6px;
  gap: 5px;
}
.search {
  display: flex;
  align-items: center;
  width: 158px;
  height: 20px;
  margin: 0 4px 0 9px;
  padding: 0 6px 0 2px;
  background: #fff;
  border: 1px solid #b5bac2;
}
.search input {
  flex: 1;
  min-width: 0;
  outline: 0;
}
.search input::placeholder {
  color: #777;
}

/* ribbon */
.ribbon {
  display: flex;
  height: 94px;
  background: #fcfcfc;
  border-bottom: 1px solid #b9bec8;
}
.group {
  position: relative;
  display: flex;
  flex-direction: column;
  justify-content: space-between;
  padding: 6px 4px 1px;
  border-right: 1px solid #d3d6da;
}
.group.first {
  padding-left: 9px;
}
.group.small {
  padding: 4px 8px 1px;
}
.group h2 {
  margin: 0;
  font-size: 12px;
  font-weight: 400;
  text-align: center;
  color: #6a6f7c;
}
.bigs {
  display: flex;
}
.bigs button {
  flex-direction: column;
  justify-content: flex-start;
  width: 36px;
  height: 64px;
}
.bigs svg {
  width: 32px;
  height: 32px;
  margin-bottom: 3px;
}
.bigs .caret {
  margin-top: 7px;
}
.bigs .w1 { width: 32px; }
.bigs .w3 { width: 48px; }
.bigs .w4 { width: 60px; }
.smalls {
  display: grid;
  grid-auto-rows: 23px;
}
.smalls button {
  justify-content: flex-start;
  gap: 3px;
}
.smalls .caret {
  margin-left: 3px;
}
.edit { grid-template-columns: 76px 88px 80px; }
.morph { grid-template-columns: 136px 92px; }
.basic { grid-template-columns: 99px 45px; }
.launch {
  position: absolute;
  right: 5px;
  bottom: 5px;
}
.launch svg {
  width: 8px;
  height: 8px;
}

/* selection bar */
.selbar {
  display: flex;
  align-items: center;
  height: 30px;
  padding: 1px 4px 0;
}
.grip {
  width: 2px;
  height: 16px;
  margin-right: 3px;
  background: repeating-linear-gradient(#8b8f9f 0 2px, transparent 2px 4px);
}
.selbar button {
  width: 24px;
  height: 22px;
}
.selbar .drop {
  width: 36px;
  gap: 5px;
}
.on, .selbar .on {
  background: #fee38a;
  border: 1px solid #cda846;
}
.selbar .sep {
  margin: 0 3px;
  height: 18px;
}
.combo {
  position: relative;
  display: flex;
  align-items: center;
  width: 96px;
  height: 21px;
  margin: 0 2px;
  background: #fff;
  border: 1px solid #b5bac2;
  color: #000;
}
.combo::after {
  content: "";
  position: absolute;
  right: 6px;
  top: 7px;
  border: solid transparent;
  border-width: 3px 3px 0;
  border-top-color: #333;
}
.combo select {
  flex: 1;
  height: 100%;
  padding-left: 2px;
  appearance: none;
  outline: 0;
}
.combo.part {
  width: 130px;
  margin: 0;
  background: #f0f1f2;
  border-color: #d6d9dc;
}
.part select {
  color: #777;
  opacity: 1;
}
.part::after {
  border-top-color: #999;
}

/* body */
main {
  flex: 1;
  display: flex;
  min-height: 0;
}
.manager {
  display: flex;
  flex-direction: column;
  width: 357px;
  margin-right: 4px;
}
.mhead {
  display: flex;
  align-items: center;
  height: 20px;
  padding: 0 2px 0 5px;
  color: #444;
}
.mhead span {
  flex: 1;
}
.mhead button {
  width: 20px;
}
.mbody {
  flex: 1;
  display: flex;
  border-top: 1px solid #b5bac2;
  min-height: 0;
}
.side {
  width: 32px;
}
.side button {
  width: 32px;
  height: 47px;
}
.side .active {
  background: #fcfcfc;
  border: 1px solid #b5bac2;
  border-width: 0 0 1px 1px;
}
.side svg {
  width: 24px;
  height: 26px;
}
.panel {
  flex: 1;
  display: flex;
  flex-direction: column;
  min-width: 0;
  margin-top: 1px;
  border: 1px solid #b0b4bb;
  border-width: 1px 2px 1px;
  background: #fff;
}
.filters {
  display: flex;
  height: 25px;
  padding-top: 1px;
  border-bottom: 1px solid #b5bac2;
  background: #e8ebee;
}
.filters .combo {
  width: 149px;
  height: 23px;
  margin: 0;
}
.filters input {
  flex: 1;
  min-width: 0;
  background: #fff;
  border: 1px solid #b5bac2;
}
.filters button {
  width: 24px;
  background: #fff;
}
.treewrap {
  flex: 1;
  min-height: 0;
  background: repeating-linear-gradient(#fff 0 18px, #f4f4f4 18px 36px) 0 23px;
}
.tree {
  width: 100%;
  table-layout: fixed;
  border-collapse: separate;
  border-spacing: 0;
  color: #000;
}
.tree th {
  height: 23px;
  padding: 0 3px;
  text-align: left;
  font-weight: 400;
  background: #eff1f5;
  border-right: 1px solid #a9b2c0;
  border-bottom: 1px solid #a9b2c0;
}
.tree th:first-child {
  width: 211px;
}
.tree td {
  height: 18px;
  padding: 0;
}
.tree td:first-child {
  border-right: 1px solid #dcdfe3;
}
.tree tr:nth-child(even) td {
  background: #f4f4f4;
}
.tree tr:nth-child(odd) td {
  background: #fff;
}
.node {
  display: flex;
  align-items: center;
  gap: 3px;
  height: 18px;
  padding-left: 2px;
}
.node.l1 { padding-left: 16px; }
.node.l2 { padding-left: 45px; }
.node.stop {
  color: #f01010;
}
.chev {
  width: 6px;
  height: 6px;
  margin: 0 5px 0 1px;
  border: solid #888;
  border-width: 1px 1px 0 0;
  transform: rotate(45deg);
}
.chev.open {
  margin-bottom: 4px;
  border-color: #222;
  border-width: 2px 2px 0 0;
  transform: rotate(135deg);
}
.node input {
  appearance: none;
  position: relative;
  width: 13px;
  height: 13px;
  margin-right: 3px;
  background: #fff;
  border: 1px solid #000;
}
.node input:checked::after {
  content: "";
  position: absolute;
  left: 3px;
  top: -1px;
  width: 5px;
  height: 9px;
  border: solid #0a8a0a;
  border-width: 0 2px 2px 0;
  transform: rotate(40deg);
}
.replay {
  justify-content: flex-start;
  height: 24px;
  padding-left: 5px;
  gap: 6px;
  border-top: 2px solid #b5bac2;
  background: #fcfcfc;
  font-weight: 700;
}
.replay i {
  border: solid transparent;
  border-width: 5px 0 5px 8px;
  border-left-color: #555a62;
}

/* document area */
.doc {
  flex: 1;
  display: flex;
  flex-direction: column;
  min-width: 0;
  margin-right: 1px;
}
.doctabs {
  display: flex;
  align-items: center;
  height: 22px;
}
.doctab {
  display: flex;
  align-items: center;
  justify-content: center;
  gap: 6px;
  width: 150px;
  height: 22px;
  padding-left: 14px;
  background: #fcfcfc;
  border: 1px solid #b5bac2;
  border-bottom: 0;
  font-family: Roboto, "Noto Sans CJK SC", sans-serif;
  color: #000;
}
.doctabs svg {
  width: 10px;
  height: 10px;
}
.add {
  margin-left: 6px;
}
.more {
  margin: 0 4px 0 auto;
}
.canvas {
  position: relative;
  flex: 1;
  min-height: 0;
  background: linear-gradient(#fdfdfd, #9e9e9e);
  border-top: 1px solid #b5bac2;
}
.model {
  position: absolute;
  width: 100%;
  height: 100%;
}
.axis {
  font: 16px "Open Sans", sans-serif;
  text-anchor: middle;
}
.tan { fill: #a66a00; }
.x { fill: #f00; }
.y { fill: #2c3; }
.z { fill: #00f; }
.hint {
  position: absolute;
  left: 20px;
  top: 8px;
  margin: 0;
  font-size: 11px;
  line-height: 14px;
  color: #000;
}
.viewbar {
  position: relative;
  display: flex;
  justify-content: center;
  align-items: center;
  padding-top: 2px;
}
.viewbar button {
  width: 25px;
  height: 22px;
}
.viewbar .drop {
  width: 37px;
  gap: 4px;
}
.viewbar .layer {
  width: 114px;
  padding-left: 6px;
  font-family: Roboto, "Noto Sans CJK SC", sans-serif;
}
.bulb {
  width: 12px;
  height: 16px;
  margin-right: 3px;
}
.scale {
  position: absolute;
  left: 4px;
  bottom: 0;
  font-size: 17px;
  line-height: 22px;
  color: #111;
}

/* status bar */
.status {
  display: flex;
  align-items: center;
  height: 33px;
  padding-left: 6px;
  border-top: 1px solid #b9bec6;
  border-bottom: 3px solid #d0dde9;
  color: #444;
}
.msg {
  flex: 1;
}
.status .sep {
  height: 25px;
  margin-right: 14px;
  background: #888;
}
.status button {
  width: 22px;
  height: 20px;
  margin-right: 7px;
}
.cmd {
  position: relative;
  width: 350px;
  margin-left: 1px;
}
.cmd input {
  width: 100%;
  height: 22px;
  display: block;
  background: #fff;
  border: 1px solid #b5bac2;
}
.cmd span {
  position: absolute;
  right: 16px;
  top: 0;
  font-size: 17px;
  line-height: 22px;
  color: #8a8a8a;
}

/* network speed widget */
.netmon {
  position: fixed;
  right: 1px;
  top: 436px;
  display: flex;
  flex-direction: column;
  align-items: center;
  width: 32px;
  padding: 10px 0 5px;
  border-radius: 8px 0 0 8px;
  background: linear-gradient(#97989b, #838589);
  box-shadow: 0 1px 4px #888;
  color: #fff;
}
.netmon > svg {
  width: 12px;
  height: 12px;
}
.netmon .meter {
  width: 10px;
  height: 30px;
  margin: 17px 0 14px;
}
.netmon b {
  font-size: 11px;
  font-weight: 400;
  line-height: 14px;
}
.netmon small {
  display: flex;
  align-items: center;
  gap: 3px;
  font-size: 10px;
  line-height: 10px;
  margin-bottom: 3px;
}
.netmon small svg {
  width: 6px;
  height: 8px;
}
```
